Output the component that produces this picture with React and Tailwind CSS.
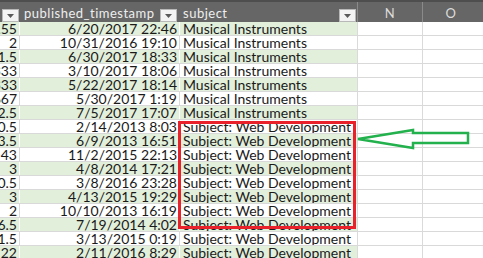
import React from 'react'

const rows = [
  ['1.55', '6/20/2017 22:46', 'Musical Instruments'],
  ['2', '10/31/2016 19:10', 'Musical Instruments'],
  ['11.5', '6/30/2017 18:33', 'Musical Instruments'],
  ['0.8333', '3/10/2017 18:06', 'Musical Instruments'],
  ['0.8333', '5/22/2017 18:14', 'Musical Instruments'],
  ['0.6667', '5/30/2017 1:19', 'Musical Instruments'],
  ['12.5', '7/5/2017 17:07', 'Musical Instruments'],
  ['10.5', '2/14/2013 8:03', 'Subject: Web Development'],
  ['13.5', '6/9/2013 16:51', 'Subject: Web Development'],
  ['43', '11/2/2015 22:13', 'Subject: Web Development'],
  ['3', '4/8/2014 17:21', 'Subject: Web Development'],
  ['10.5', '3/8/2016 23:28', 'Subject: Web Development'],
  ['3', '4/13/2015 19:29', 'Subject: Web Development'],
  ['2', '10/10/2013 16:19', 'Subject: Web Development'],
  ['16.5', '7/19/2014 4:02', 'Subject: Web Development'],
  ['11.5', '3/13/2015 0:19', 'Subject: Web Development'],
  ['22', '2/11/2016 8:29', 'Subject: Web Development'],
]

function FilterButton() {
  return (
    <div className="flex h-[13px] w-[17px] shrink-0 items-center justify-center border border-[#b8b8b8] bg-[#f3f3f3]">
      <svg width="7" height="4" viewBox="0 0 7 4">
        <path d="M0 0 L7 0 L3.5 4 Z" fill="#5a5a5a" />
      </svg>
    </div>
  )
}

function Row({ a, ts, subject, band }) {
  const bg = band ? 'bg-[#e2efda]' : 'bg-white'
  const line = band ? 'border-white' : 'border-[#dadada]'
  return (
    <div className="flex h-[14px] border-b border-[#d9d9d9] text-[14px] leading-[13px] text-[#1a1a1a]">
      <div className={`flex w-[20px] shrink-0 justify-end overflow-hidden whitespace-nowrap border-r pr-[2px] ${bg} ${line}`}>{a}</div>
      <div className={`flex w-[160px] shrink-0 justify-end overflow-hidden whitespace-nowrap border-r pr-[2px] ${bg} ${line}`}>{ts}</div>
      <div className={`w-[178px] shrink-0 overflow-hidden whitespace-nowrap border-r pl-[3px] ${bg} border-[#dadada]`}>{subject}</div>
      <div className="w-[65px] shrink-0 border-r border-[#dadada] bg-white" />
      <div className="flex-1 bg-white" />
    </div>
  )
}

export default function App() {
  return (
    <div className="relative h-[258px] w-[483px] overflow-hidden bg-white font-['Lato',sans-serif]">
      <div className="h-[2px] bg-[#4e4e4e]" />
      <div className="flex h-[20px] bg-[#666666] text-[13px] tracking-[0.5px] text-[#eeeeee]">
        <div className="flex w-[20px] shrink-0 items-end justify-end pr-[1px]">
          <FilterButton />
        </div>
        <div className="flex w-[160px] shrink-0 items-end justify-between pr-[3px]">
          <span className="pb-[2px] pl-[4px] leading-[13px]">published_timestamp</span>
          <FilterButton />
        </div>
        <div className="flex w-[178px] shrink-0 items-end justify-between border-r border-[#8a8a8a] pr-[1px]">
          <span className="pb-[2px] pl-[3px] leading-[13px]">subject</span>
          <FilterButton />
        </div>
        <div className="flex w-[65px] shrink-0 items-center justify-center border-r border-[#8a8a8a] pt-[4px] text-[#dcdcdc]">N</div>
        <div className="flex flex-1 items-center justify-center pt-[4px] pr-[4px] text-[#dcdcdc]">O</div>
      </div>
      {rows.map((r, i) => (
        <Row key={i} a={r[0]} ts={r[1]} subject={r[2]} band={i % 2 === 0} />
      ))}

      <div className="absolute left-[178px] top-[121px] h-[108px] w-[178px] border-[3px] border-[#e8212b]" />
      <svg className="absolute left-0 top-0" width="483" height="258">
        <polygon
          points="358,139 413,130 413,133 468,133 468,143 413,143 413,148"
          fill="none"
          stroke="#22b14c"
          strokeWidth="2.5"
          strokeLinejoin="miter"
        />
      </svg>
    </div>
  )
}
